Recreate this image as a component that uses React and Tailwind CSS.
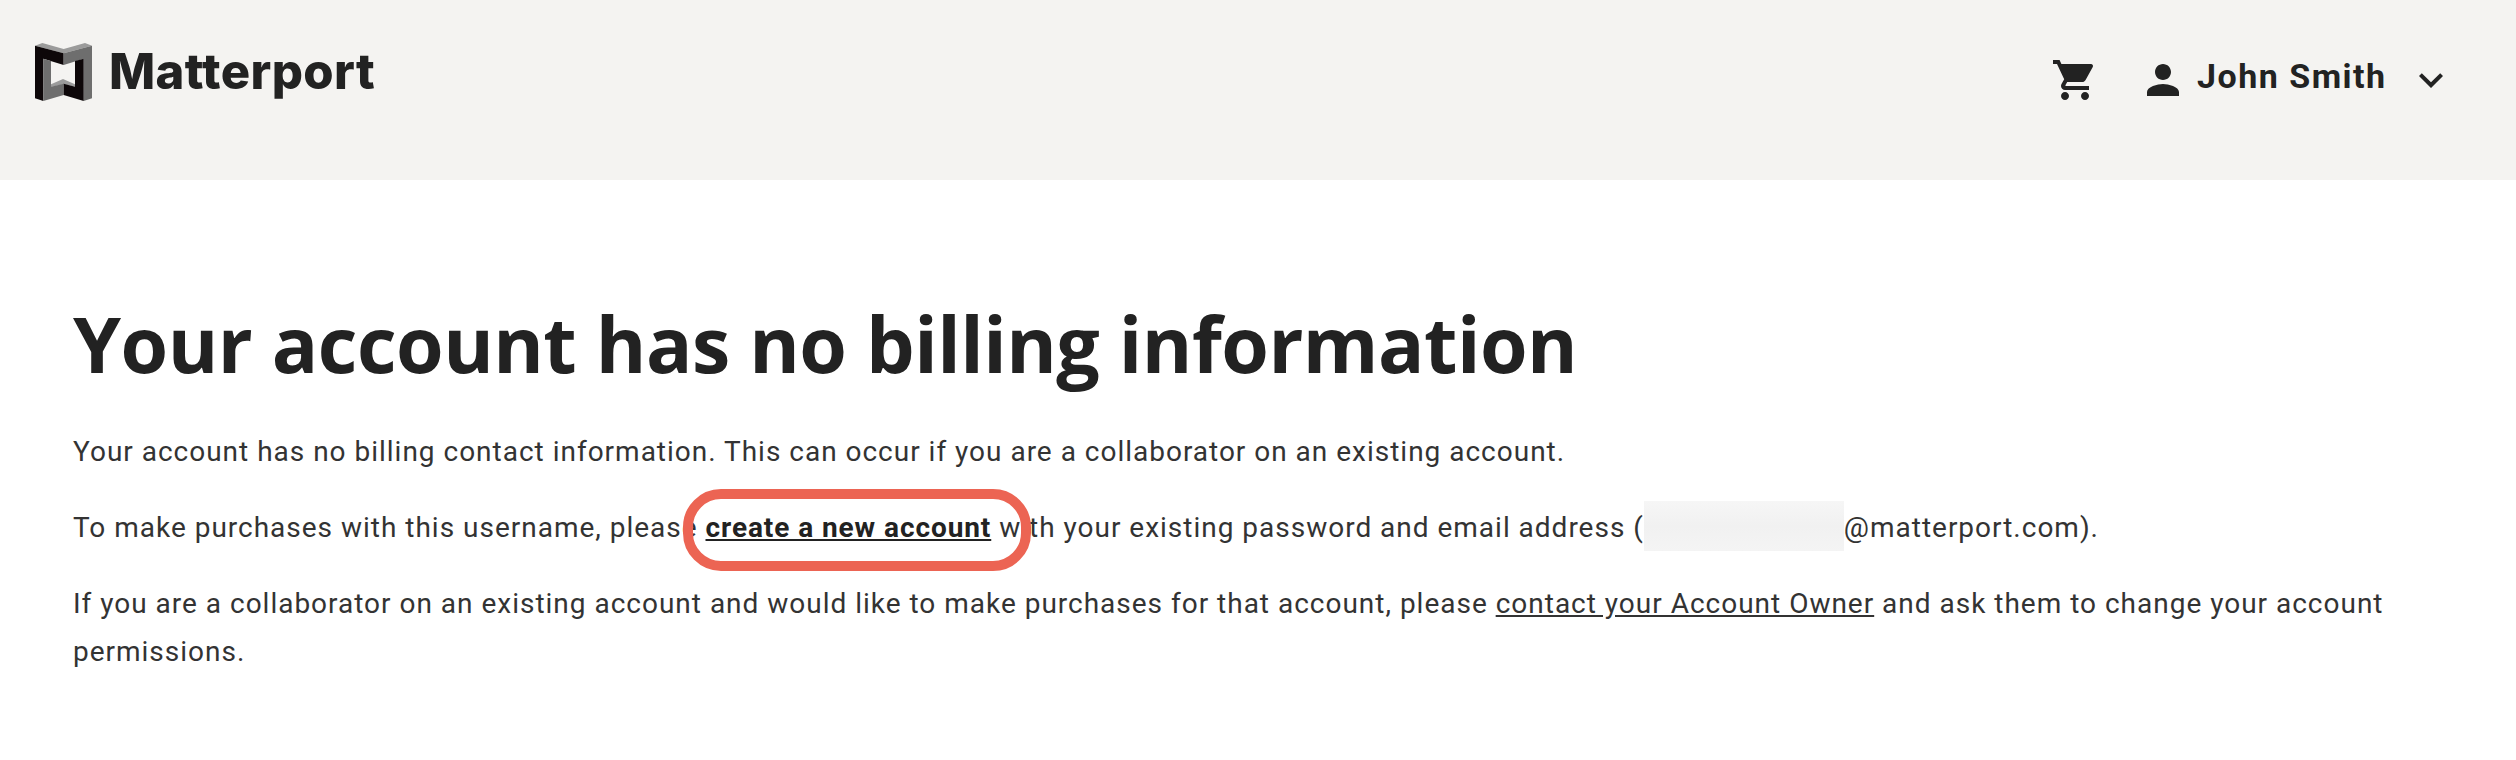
import { MdExpandMore, MdPerson, MdShoppingCart } from "react-icons/md";

function Logo() {
  return (
    <a className="flex items-start gap-[17px]">
      <svg viewBox="0 0 171 174" className="h-[58px] w-[57px]">
        <path d="M0 8 L22 0 L86 18 L150 0 L171 8 L86 31 Z" fill="#9b9b9b" />
        <path d="M48 124 L84 108 L120 124 L120 131 L86 124 L48 132 Z" fill="#9b9b9b" />
        <path d="M0 8 L86 31 V66 L25 47 V174 L0 166 Z" fill="#0d0709" />
        <path d="M86 31 L171 8 V166 L146 174 V47 L86 66 Z" fill="#6e6e6e" />
        <path d="M25 47 L48 54 V131 L86 122 V156 L25 174 Z" fill="#6e6e6e" />
        <path d="M146 47 L120 54 V131 L86 122 V156 L146 174 Z" fill="#0d0709" />
      </svg>
      <span className="whitespace-nowrap font-['Inter'] text-[49px] leading-[58px] font-extrabold tracking-[0.4px]">
        Matterport
      </span>
    </a>
  );
}

function Header() {
  return (
    <header className="flex h-[180px] items-start justify-between bg-[#f4f3f1] pr-[61px] pl-[35px]">
      <div className="pt-[43px]">
        <Logo />
      </div>
      <div className="flex items-center pt-14">
        <MdShoppingCart className="size-12" />
        <MdPerson className="ml-10 size-12" />
        <span className="mb-[7px] ml-[10px] w-[188px] whitespace-nowrap font-['Roboto'] text-[34px] leading-[41px] font-bold tracking-[1.5px]">
          John Smith
        </span>
        <MdExpandMore className="ml-[22px] size-12" />
      </div>
    </header>
  );
}

export default function App() {
  return (
    <div className="min-h-[760px] bg-white font-['Roboto'] text-[#222222]">
      <Header />
      <main className="px-[73px] pt-[111px]">
        <h1 className="whitespace-nowrap font-['Open_Sans'] text-[77px] leading-[106px] font-bold tracking-[-0.5px]">
          Your account has no billing information
        </h1>
        <div className="mt-[31px] flex flex-col gap-7 text-[28px] leading-[48px] tracking-[0.99px] text-[#333333]">
          <p>
            Your account has no billing contact information. This can occur if
            you are a collaborator on an existing account.
          </p>
          <p className="whitespace-nowrap">
            To make purchases with this username, please{" "}
            <span className="relative inline-block">
              <a className="font-bold tracking-[0.92px] text-[#222222] underline">
                create a new account
              </a>
              <span className="absolute -top-[15px] -left-[23px] h-[82px] w-[348px] rounded-[38px] border-[10px] border-[#ec6453]" />
            </span>{" "}
            with your existing password and email address (
            <span className="-my-1 inline-block h-[50px] w-[200px] -translate-y-1 bg-linear-to-b from-[#f6f6f6] via-[#f1f1f1] to-[#f4f4f4] align-middle" />
            @matterport.com).
          </p>
          <p>
            If you are a collaborator on an existing account and would like to
            make purchases for that account, please{" "}
            <a className="underline">contact your Account Owner</a> and ask them
            to change your account permissions.
          </p>
        </div>
      </main>
    </div>
  );
}
